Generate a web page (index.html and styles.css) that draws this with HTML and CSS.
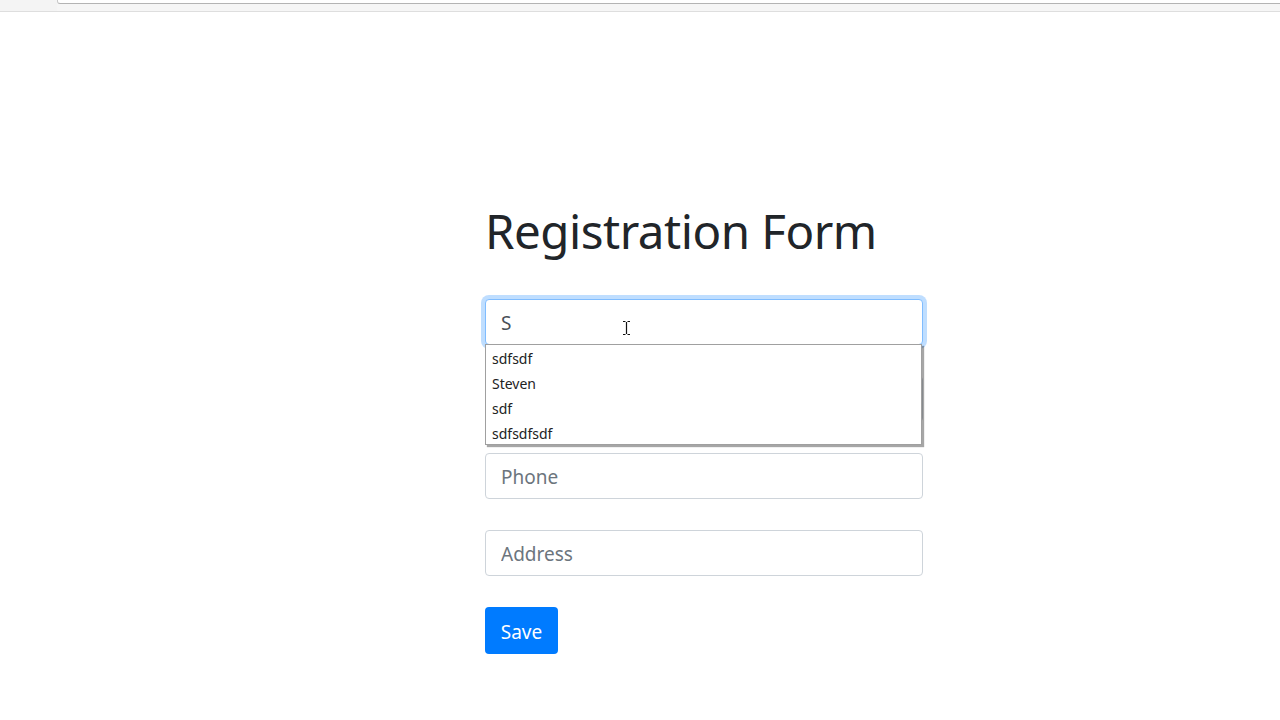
FILE: index.html
```html
<!DOCTYPE html>
<html lang="en">
<head>
<meta charset="utf-8">
<title>Registration Form</title>
<link rel="stylesheet" href="styles.css">
</head>
<body>
<div class="chrome">
  <div class="chrome-side"></div>
  <div class="chrome-main"></div>
</div>
<main class="page">
  <h1 class="title">Registration Form</h1>
  <form class="form">
    <div class="field">
      <input class="control focused" type="text" value="S">
      <ul class="suggest">
        <li>sdfsdf</li>
        <li>Steven</li>
        <li>sdf</li>
        <li>sdfsdfsdf</li>
      </ul>
      <svg class="ibeam" width="9" height="16" viewBox="0 0 9 16"><path d="M1 1.5h2.5M5.5 1.5H8M4.5 2v12M1 14.5h2.5M5.5 14.5H8" stroke="#111" stroke-width="1.2" fill="none"/></svg>
    </div>
    <div class="field"><input class="control" type="text" placeholder="Email"></div>
    <div class="field"><input class="control" type="text" placeholder="Phone"></div>
    <div class="field"><input class="control" type="text" placeholder="Address"></div>
    <button class="btn" type="button">Save</button>
  </form>
</main>
</body>
</html>
```
FILE: styles.css
```css
html, body {
  margin: 0;
  padding: 0;
  background: #fff;
}
body {
  font-family: "Noto Sans", "Open Sans", sans-serif;
  color: #212529;
}
.chrome {
  display: flex;
  height: 11px;
  border-bottom: 1px solid #dedede;
  background: #f6f6f6;
}
.chrome-side {
  width: 57px;
  background: #f4f4f4;
}
.chrome-main {
  flex: 1;
  height: 3px;
  background: #fff;
  border-left: 1px solid #c8c8c8;
  border-bottom: 1px solid #b4b4b4;
  border-bottom-left-radius: 3px;
}
.page {
  padding-left: 485px;
  width: 438px;
}
.title {
  font-weight: 400;
  font-size: 47.5px;
  line-height: 60px;
  margin: 0;
  padding-top: 189px;
  padding-bottom: 38px;
  letter-spacing: -0.5px;
}
.form {
  display: flex;
  flex-direction: column;
  gap: 31px;
}
.field {
  position: relative;
}
.control {
  box-sizing: border-box;
  width: 438px;
  height: 46px;
  padding: 2px 15px 0;
  border: 1px solid #ced4da;
  border-radius: 4px;
  font-family: inherit;
  font-size: 19px;
  color: #495057;
  background: #fff;
  outline: none;
  display: block;
}
.control::placeholder {
  color: #6c757d;
}
.control.focused {
  border-color: #80bdff;
  box-shadow: 0 0 0 4px rgba(0, 123, 255, 0.25);
}
.suggest {
  position: absolute;
  left: 0;
  top: 45px;
  z-index: 5;
  box-sizing: border-box;
  width: 437px;
  height: 101px;
  margin: 0;
  padding: 0;
  list-style: none;
  background: #fff;
  border: 1px solid #a0a0a0;
  box-shadow: 2px 2px 1px rgba(0, 0, 0, 0.35);
  font-size: 14px;
  color: #222;
}
.suggest li {
  height: 25px;
  line-height: 27px;
  padding-left: 6px;
}
.ibeam {
  position: absolute;
  left: 137px;
  top: 21px;
  z-index: 6;
}
.btn {
  align-self: flex-start;
  width: 73px;
  height: 47px;
  border: 0;
  border-radius: 4px;
  background: #007bff;
  color: #fff;
  font-family: inherit;
  font-size: 19px;
  padding: 2px 0 0;
}
```
